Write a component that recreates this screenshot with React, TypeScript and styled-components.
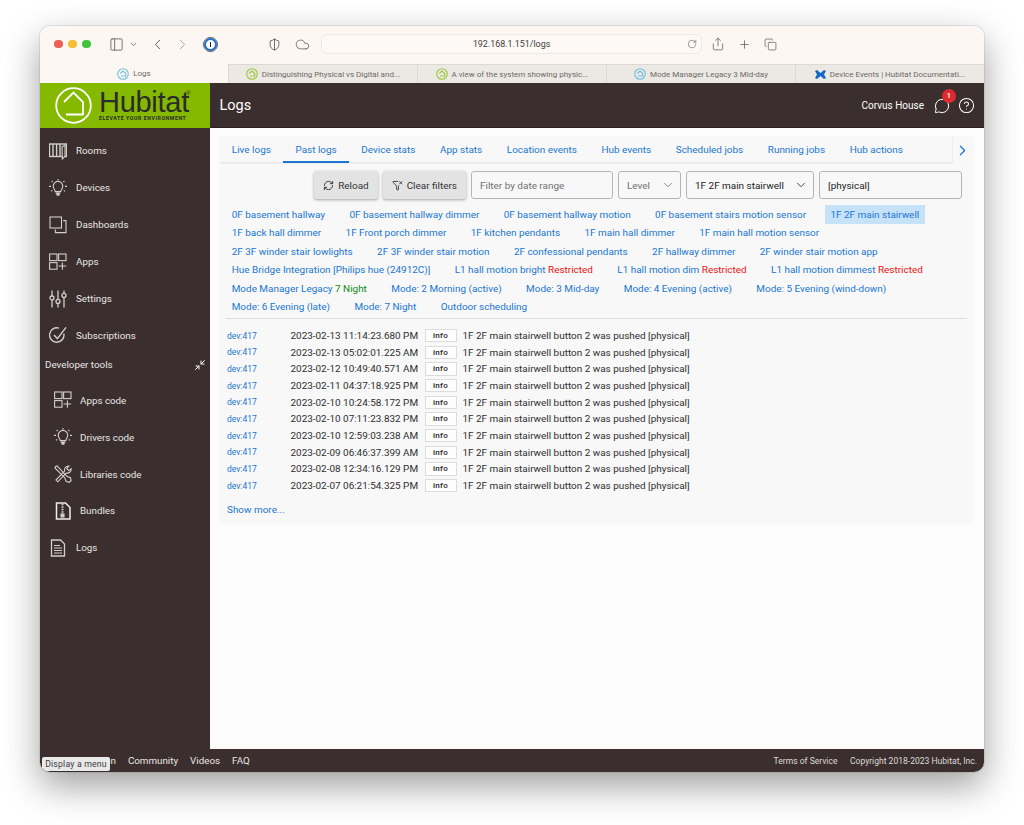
import { ReactNode } from "react";
import styled, { createGlobalStyle } from "styled-components";
import {
  ChevronDown,
  ChevronLeft,
  ChevronRight,
  CircleHelp,
  Cloud,
  Copy,
  FunnelX,
  MessageCircle,
  Minimize2,
  PanelLeft,
  Plus,
  RefreshCw,
  RotateCw,
  Share,
  ShieldHalf,
} from "lucide-react";

const GlobalStyle = createGlobalStyle`
  html, body {
    margin: 0;
    background: #ffffff;
    font-family: Roboto, "Liberation Sans", sans-serif;
  }
  * { box-sizing: border-box; }
`;

const Page = styled.div`
  width: 1024px;
  height: 825px;
  padding: 26px 40px 53px;
  overflow: hidden;
`;

const Window = styled.div`
  position: relative;
  width: 944px;
  height: 746px;
  display: flex;
  flex-direction: column;
  border-radius: 10px;
  overflow: hidden;
  box-shadow: 0 14px 36px rgba(0, 0, 0, 0.38), 0 0 0 1px rgba(0, 0, 0, 0.08);
`;

const Toolbar = styled.div`
  height: 38px;
  flex: none;
  display: flex;
  align-items: center;
  padding: 0 0 2px 14px;
  background: #fcf7f3;
  color: #5c5a58;
`;

const Light = styled.span<{ $color: string }>`
  width: 8.5px;
  height: 8.5px;
  border-radius: 50%;
  margin-right: 5.7px;
  background: ${(p) => p.$color};
`;

const ToolGroup = styled.div<{ $left: number; $gap?: number }>`
  display: flex;
  align-items: center;
  gap: ${(p) => p.$gap ?? 0}px;
  margin-left: ${(p) => p.$left}px;
`;

const UrlBar = styled.div`
  position: relative;
  width: 381px;
  height: 20px;
  margin-left: 11px;
  display: flex;
  align-items: center;
  justify-content: center;
  border: 1px solid #eee9e4;
  border-radius: 6px;
  background: #fdf9f6;
  font-size: 8.9px;
  color: #3f3d3b;
  svg {
    position: absolute;
    right: 4px;
    top: 4px;
    color: #8b8987;
  }
`;

const OnePassword = styled.span`
  width: 13px;
  height: 13px;
  border-radius: 50%;
  border: 2.5px solid #1f6fd6;
  outline: 1px solid #555;
  background: #fff;
  display: flex;
  align-items: center;
  justify-content: center;
  &::after {
    content: "";
    width: 1.5px;
    height: 5px;
    background: #123;
  }
`;

const TabStrip = styled.div`
  height: 19px;
  flex: none;
  display: flex;
  background: #ece8e4;
`;

const BrowserTab = styled.div<{ $active?: boolean }>`
  flex: 1;
  display: flex;
  align-items: center;
  justify-content: center;
  gap: 4px;
  font-size: 8px;
  white-space: nowrap;
  color: #6d6a67;
  background: ${(p) => (p.$active ? "#fcf7f3" : "#ece8e4")};
  border-left: ${(p) => (p.$active ? "none" : "1px solid #dcd8d4")};
  border-top: ${(p) => (p.$active ? "none" : "1px solid #dcd8d4")};
`;

const AppHeader = styled.div`
  height: 45px;
  flex: none;
  display: flex;
  background: #3a2f2e;
  color: #fff;
`;

const LogoCell = styled.div`
  width: 169.5px;
  flex: none;
  display: flex;
  align-items: center;
  padding-left: 15px;
  gap: 7px;
  background: #84b900;
  color: #2b2a2e;
`;

const LogoText = styled.div`
  display: flex;
  flex-direction: column;
`;

const LogoWord = styled.span`
  font-family: "Liberation Sans", sans-serif;
  font-size: 29px;
  letter-spacing: -0.28px;
  line-height: 25px;
  sup {
    font-size: 6px;
    margin-left: -3px;
    vertical-align: 17px;
    line-height: 0;
    letter-spacing: 0;
  }
`;

const LogoTag = styled.span`
  font-size: 5.2px;
  line-height: 6px;
  font-weight: 700;
  letter-spacing: 0.58px;
  white-space: nowrap;
`;

const HeaderBar = styled.div`
  flex: 1;
  display: flex;
  align-items: center;
  padding: 1px 9px 0 10px;
  border-bottom: 1px solid #2a2221;
`;

const PageTitle = styled.h1`
  margin: 0;
  font-size: 14.5px;
  font-weight: 400;
  flex: 1;
`;

const HubName = styled.span`
  font-size: 10px;
  margin-right: 10px;
`;

const BellWrap = styled.div`
  position: relative;
  display: flex;
  margin-right: 8px;
`;

const Badge = styled.span`
  position: absolute;
  top: -9px;
  right: -6px;
  width: 14px;
  height: 14px;
  border-radius: 50%;
  background: #dc2a2f;
  color: #fff;
  font-size: 7.5px;
  font-weight: 500;
  display: flex;
  align-items: center;
  justify-content: center;
`;

const Body = styled.div`
  flex: 1;
  min-height: 0;
  display: flex;
`;

const Sidebar = styled.nav`
  width: 169.5px;
  flex: none;
  background: #3a2f2e;
  padding-top: 4.5px;
`;

const NavItem = styled.div<{ $sub?: boolean }>`
  height: 36.9px;
  display: flex;
  align-items: center;
  gap: ${(p) => (p.$sub ? "8px" : "9px")};
  padding-left: ${(p) => (p.$sub ? "14px" : "9px")};
  color: #e9e6e4;
  font-size: 9.8px;
`;

const NavIcon = styled.svg`
  width: 18px;
  height: 18px;
  flex: none;
  fill: none;
  stroke: #d2cfcd;
  stroke-width: 1.1;
`;

const SectionHead = styled.div`
  height: 22px;
  margin-bottom: 6px;
  padding: 0 4px 0 5px;
  display: flex;
  align-items: center;
  justify-content: space-between;
  color: #e9e6e4;
  font-size: 9.8px;
  svg {
    color: #fff;
  }
`;

const Main = styled.main`
  flex: 1;
  min-width: 0;
  background: #fcfcfc;
  padding: 8px 10px 0 9.5px;
`;

const Panel = styled.section`
  height: 388px;
  background: #f8f8f8;
  padding: 0 7px;
`;

const TabsRow = styled.div`
  height: 27px;
  display: flex;
  align-items: flex-start;
  margin-left: -6.5px;
`;

const Tabs = styled.div`
  width: 732px;
  height: 27px;
  flex: none;
  display: flex;
  border-bottom: 1px solid #e6e6e6;
  box-shadow: 1px 1px 1px rgba(0, 0, 0, 0.04);
`;

const Tab = styled.div<{ $active?: boolean }>`
  height: 27px;
  padding: 2px 12.3px 0;
  display: flex;
  align-items: center;
  font-size: 9.95px;
  white-space: nowrap;
  color: #1976d2;
  border-bottom: 2px solid ${(p) => (p.$active ? "#1976d2" : "transparent")};
`;

const TabArrow = styled.div`
  width: 22px;
  height: 29px;
  flex: none;
  display: flex;
  align-items: center;
  justify-content: center;
  color: #1976d2;
`;

const Filters = styled.div`
  height: 28px;
  margin-top: 8px;
  display: flex;
  justify-content: flex-end;
  gap: 5px;
  padding-right: 5px;
`;

const ActionButton = styled.button`
  height: 28px;
  padding: 0 9px;
  display: flex;
  align-items: center;
  gap: 4px;
  border: none;
  border-radius: 3px;
  background: #e3e3e3;
  color: #333;
  font-family: inherit;
  font-size: 9.95px;
  box-shadow: 0 1px 3px rgba(0, 0, 0, 0.35);
`;

const Field = styled.div<{ $width: number; $muted?: boolean }>`
  width: ${(p) => p.$width}px;
  height: 28px;
  padding: 0 5px 0 8px;
  display: flex;
  align-items: center;
  justify-content: space-between;
  border: 1px solid #b5b5b5;
  border-radius: 3px;
  font-size: 9.95px;
  white-space: nowrap;
  color: ${(p) => (p.$muted ? "#707070" : "#222")};
`;

const ChipBlock = styled.div`
  margin-top: 7px;
  padding-bottom: 2px;
  border-bottom: 1px solid #dedede;
`;

const ChipRow = styled.div`
  height: 18.4px;
  line-height: 18.4px;
  white-space: nowrap;
  font-size: 9.95px;
  color: #1976d2;
`;

const Chip = styled.span<{ $selected?: boolean }>`
  display: inline;
  padding: 4px 5.7px;
  margin-right: 13px;
  background: ${(p) => (p.$selected ? "#c6e2f9" : "transparent")};
`;

const Note = styled.span<{ $color: string }>`
  color: ${(p) => p.$color};
`;

const LogList = styled.div`
  margin-top: 8px;
`;

const LogRow = styled.div`
  height: 16.67px;
  display: flex;
  align-items: center;
  font-size: 9.93px;
  color: #2e2e2e;
  white-space: nowrap;
`;

const DevLink = styled.span`
  width: 64.5px;
  padding-left: 1px;
  font-size: 8.5px;
  color: #1976d2;
`;

const Stamp = styled.span`
  width: 134px;
`;

const InfoTag = styled.span`
  width: 32px;
  height: 13.5px;
  margin-right: 6px;
  display: flex;
  align-items: center;
  justify-content: center;
  border: 1px solid #dcdcdc;
  background: #fdfdfd;
  font-size: 8px;
  font-weight: 500;
  letter-spacing: 0.3px;
  color: #222;
`;

const ShowMore = styled.div`
  margin-top: 10px;
  padding-left: 1px;
  font-size: 9.95px;
  color: #1976d2;
`;

const Footer = styled.footer`
  height: 23px;
  flex: none;
  display: flex;
  align-items: center;
  padding: 0 7px 0 9px;
  background: #3a2f2e;
  color: #e9e6e4;
  font-size: 9.8px;
`;

const FootLinks = styled.div`
  flex: 1;
  display: flex;
  gap: 12px;
`;

const FootSmall = styled.span`
  font-size: 8.55px;
  margin-left: 12.5px;
  color: #dedbd9;
`;

const MenuTip = styled.div`
  position: absolute;
  left: 2px;
  bottom: 1.5px;
  width: 68px;
  height: 14px;
  display: flex;
  align-items: center;
  justify-content: center;
  border-radius: 2px;
  background: #e9e9e9;
  color: #3a3a3a;
  font-size: 8.7px;
  letter-spacing: 0.2px;
  white-space: nowrap;
`;

function Icon({ children }: { children: ReactNode }) {
  return <NavIcon viewBox="0 0 18 18">{children}</NavIcon>;
}

function Favicon({ color }: { color: string }) {
  return (
    <svg width="12" height="12" viewBox="0 0 12 12" fill="none" stroke={color} strokeWidth="1.1">
      <circle cx="6" cy="6" r="5.3" />
      <path d="M3.3 5.5L6 3l2.7 2.5V8H4" />
    </svg>
  );
}

const AppsIcon = (
  <Icon>
    <rect x="0.6" y="1" width="7.4" height="6.6" />
    <rect x="9.6" y="1" width="7.4" height="6.6" />
    <rect x="0.6" y="9.6" width="7.4" height="6.6" />
    <path d="M9.6 13h7.6M13.4 9.4v7.4" />
  </Icon>
);

const BulbIcon = (
  <Icon>
    <path d="M6.2 12.6c0-2-2-2.8-2-5.4a4.8 4.8 0 0 1 9.6 0c0 2.6-2 3.4-2 5.4z" />
    <path d="M6.8 14.4h4.4M7.6 16h2.8" strokeWidth="1.6" />
    <path d="M9 0v1.4M2.6 2l1 1M15.4 2l-1 1M0 7.4h2M16 7.4h2M2 12.4l1.2-1M16 12.4l-1.2-1" />
  </Icon>
);

const navTop = [
  {
    label: "Rooms",
    icon: (
      <Icon>
        <rect x="0.5" y="2" width="17" height="12.5" strokeWidth="1.4" />
        <path d="M4 2v12.5M7.6 2v12.5M11 2v12.5" strokeWidth="1.4" />
        <path d="M13 5l3-2v11l-2.6 3-.4-12z" fill="#3a2f2e" />
      </Icon>
    ),
  },
  { label: "Devices", icon: BulbIcon },
  {
    label: "Dashboards",
    icon: (
      <Icon>
        <rect x="1" y="1" width="11.5" height="11" />
        <path d="M14.2 4.6h2.8v12H6.4v-3" />
      </Icon>
    ),
  },
  { label: "Apps", icon: AppsIcon },
  {
    label: "Settings",
    icon: (
      <Icon>
        <path d="M3 0.5v5.5M3 10v7.5M9 0.5v9M9 13.4v4.1M15 0.5v3M15 7.4v10.1" strokeWidth="1.3" />
        <circle cx="3" cy="8" r="2" strokeWidth="1.3" />
        <circle cx="9" cy="11.4" r="2" strokeWidth="1.3" />
        <circle cx="15" cy="5.4" r="2" strokeWidth="1.3" />
      </Icon>
    ),
  },
  {
    label: "Subscriptions",
    icon: (
      <Icon>
        <path d="M14.8 7.6A7.2 7.2 0 1 1 10 2.2" strokeWidth="1.4" />
        <path d="M5 9l3.4 3.6L17 1.4" strokeWidth="1.4" />
      </Icon>
    ),
  },
];

const navDev = [
  { label: "Apps code", icon: AppsIcon },
  { label: "Drivers code", icon: BulbIcon },
  {
    label: "Libraries code",
    icon: (
      <Icon>
        <path d="M1.5 1.5l1.6-.6 9.8 10.4 3.6 1.4.6 3-2 1.6-3-1-1.4-3.6L1 3z" />
        <path d="M2 15l8.6-8.8c-.6-2.4.8-5 4.2-5.2l-2 2.6 2 2 2.4-1.8c.2 3-2.4 4.8-5 4.2L3.8 16.8z" />
      </Icon>
    ),
  },
  {
    label: "Bundles",
    icon: (
      <Icon>
        <path d="M2.5 1h9l4.5 4.6V17H2.500z" strokeWidth="1.5" stroke="#f0eeec" />
        <path d="M7.5 2.5h2M7.5 5h2M7.5 7.5h2M7.5 10h2" strokeWidth="1.5" />
        <rect x="7" y="12" width="3" height="3" fill="#d2cfcd" />
      </Icon>
    ),
  },
];

const LogsIcon = (
  <Icon>
    <path d="M2.5 1h9l4 4v12h-13z" strokeWidth="1.3" />
    <path d="M5 6.5h6M5 9h8M5 11.5h8M5 14h8" />
  </Icon>
);

const tabs = [
  "Live logs",
  "Past logs",
  "Device stats",
  "App stats",
  "Location events",
  "Hub events",
  "Scheduled jobs",
  "Running jobs",
  "Hub actions",
];

const browserTabs = [
  { label: "Logs", color: "#6fc0e0", active: true },
  { label: "Distinguishing Physical vs Digital and...", color: "#9cc63c" },
  { label: "A view of the system showing physic...", color: "#9cc63c" },
  { label: "Mode Manager Legacy 3 Mid-day", color: "#6fc0e0" },
];

const chipRows: ReactNode[][] = [
  [
    "0F basement hallway",
    "0F basement hallway dimmer",
    "0F basement hallway motion",
    "0F basement stairs motion sensor",
  ],
  [
    "1F back hall dimmer",
    "1F Front porch dimmer",
    "1F kitchen pendants",
    "1F main hall dimmer",
    "1F main hall motion sensor",
  ],
  [
    "2F 3F winder stair lowlights",
    "2F 3F winder stair motion",
    "2F confessional pendants",
    "2F hallway dimmer",
    "2F winder stair motion app",
  ],
  [
    "Hue Bridge Integration [Philips hue (24912C)]",
    <>
      L1 hall motion bright <Note $color="#f01010">Restricted</Note>
    </>,
    <>
      L1 hall motion dim <Note $color="#f01010">Restricted</Note>
    </>,
    <>
      L1 hall motion dimmest <Note $color="#f01010">Restricted</Note>
    </>,
  ],
  [
    <>
      Mode Manager Legacy <Note $color="#118a11">7 Night</Note>
    </>,
    "Mode: 2 Morning (active)",
    "Mode: 3 Mid-day",
    "Mode: 4 Evening (active)",
    "Mode: 5 Evening (wind-down)",
  ],
  ["Mode: 6 Evening (late)", "Mode: 7 Night", "Outdoor scheduling"],
];

const logTimes = [
  "2023-02-13 11:14:23.680 PM",
  "2023-02-13 05:02:01.225 AM",
  "2023-02-12 10:49:40.571 AM",
  "2023-02-11 04:37:18.925 PM",
  "2023-02-10 10:24:58.172 PM",
  "2023-02-10 07:11:23.832 PM",
  "2023-02-10 12:59:03.238 AM",
  "2023-02-09 06:46:37.399 AM",
  "2023-02-08 12:34:16.129 PM",
  "2023-02-07 06:21:54.325 PM",
];

export default function App() {
  return (
    <>
      <GlobalStyle />
      <Page>
        <Window>
          <Toolbar>
            <Light $color="#ec5f57" />
            <Light $color="#f5bd2f" />
            <Light $color="#3fc63f" />
            <ToolGroup $left={12} $gap={5}>
              <PanelLeft size={15} strokeWidth={1.3} />
              <ChevronDown size={9} />
            </ToolGroup>
            <ToolGroup $left={11.5} $gap={8}>
              <ChevronLeft size={17} strokeWidth={1.4} />
              <ChevronRight size={17} strokeWidth={1.4} color="#aaa8a6" />
            </ToolGroup>
            <ToolGroup $left={13}>
              <OnePassword />
            </ToolGroup>
            <ToolGroup $left={51} $gap={14}>
              <ShieldHalf size={13} strokeWidth={1.6} />
              <Cloud size={15} strokeWidth={1.2} />
            </ToolGroup>
            <UrlBar>
              192.168.1.151/logs
              <RotateCw size={10} />
            </UrlBar>
            <ToolGroup $left={8.5} $gap={13}>
              <Share size={14} strokeWidth={1.3} />
              <Plus size={13} strokeWidth={1.4} />
              <Copy size={13} strokeWidth={1.3} />
            </ToolGroup>
          </Toolbar>
          <TabStrip>
            {browserTabs.map((t) => (
              <BrowserTab key={t.label} $active={t.active}>
                <Favicon color={t.color} />
                {t.label}
              </BrowserTab>
            ))}
            <BrowserTab>
              <svg width="11" height="9" viewBox="0 0 11 9">
                <path d="M0 1l2-1 3.5 3L9 0l2 1-2 3.5L11 8l-2 1-3.5-3L2 9 0 8l2-3.5z" fill="#1668c7" />
              </svg>
              Device Events | Hubitat Documentati...
            </BrowserTab>
          </TabStrip>
          <AppHeader>
            <LogoCell>
              <svg width="37" height="37" viewBox="0 0 37 37" fill="none" stroke="#fff">
                <circle cx="18.5" cy="18.5" r="17.3" strokeWidth="1.8" />
                <path d="M9 15L18.5 5.5 28 15v12.5H11" strokeWidth="1.8" />
              </svg>
              <LogoText>
                <LogoWord>
                  Hubitat<sup>®</sup>
                </LogoWord>
                <LogoTag>ELEVATE YOUR ENVIRONMENT</LogoTag>
              </LogoText>
            </LogoCell>
            <HeaderBar>
              <PageTitle>Logs</PageTitle>
              <HubName>Corvus House</HubName>
              <BellWrap>
                <MessageCircle size={16} strokeWidth={1.5} />
                <Badge>1</Badge>
              </BellWrap>
              <CircleHelp size={17} strokeWidth={1.5} />
            </HeaderBar>
          </AppHeader>
          <Body>
            <Sidebar>
              {navTop.map((n) => (
                <NavItem key={n.label}>
                  {n.icon}
                  {n.label}
                </NavItem>
              ))}
              <SectionHead>
                Developer tools
                <Minimize2 size={12} />
              </SectionHead>
              {navDev.map((n) => (
                <NavItem key={n.label} $sub>
                  {n.icon}
                  {n.label}
                </NavItem>
              ))}
              <NavItem>
                {LogsIcon}
                Logs
              </NavItem>
            </Sidebar>
            <Main>
              <Panel>
                <TabsRow>
                  <Tabs>
                    {tabs.map((t) => (
                      <Tab key={t} $active={t === "Past logs"}>
                        {t}
                      </Tab>
                    ))}
                  </Tabs>
                  <TabArrow>
                    <ChevronRight size={17} strokeWidth={1.7} />
                  </TabArrow>
                </TabsRow>
                <Filters>
                  <ActionButton>
                    <RefreshCw size={11} />
                    Reload
                  </ActionButton>
                  <ActionButton>
                    <FunnelX size={11} />
                    Clear filters
                  </ActionButton>
                  <Field $width={142} $muted>
                    Filter by date range
                  </Field>
                  <Field $width={63} $muted>
                    Level
                    <ChevronDown size={14} strokeWidth={1.4} />
                  </Field>
                  <Field $width={128}>
                    1F 2F main stairwell
                    <ChevronDown size={14} strokeWidth={1.4} />
                  </Field>
                  <Field $width={143}>[physical]</Field>
                </Filters>
                <ChipBlock>
                  {chipRows.map((row, i) => (
                    <ChipRow key={i}>
                      {row.map((c, j) => (
                        <Chip key={j}>{c}</Chip>
                      ))}
                      {i === 0 && <Chip $selected>1F 2F main stairwell</Chip>}
                    </ChipRow>
                  ))}
                </ChipBlock>
                <LogList>
                  {logTimes.map((t) => (
                    <LogRow key={t}>
                      <DevLink>dev:417</DevLink>
                      <Stamp>{t}</Stamp>
                      <InfoTag>info</InfoTag>
                      1F 2F main stairwell button 2 was pushed [physical]
                    </LogRow>
                  ))}
                </LogList>
                <ShowMore>Show more...</ShowMore>
              </Panel>
            </Main>
          </Body>
          <Footer>
            <FootLinks>
              <span>Documentation</span>
              <span>Community</span>
              <span>Videos</span>
              <span>FAQ</span>
            </FootLinks>
            <FootSmall>Terms of Service</FootSmall>
            <FootSmall>Copyright 2018-2023 Hubitat, Inc.</FootSmall>
          </Footer>
          <MenuTip>Display a menu</MenuTip>
        </Window>
      </Page>
    </>
  );
}
